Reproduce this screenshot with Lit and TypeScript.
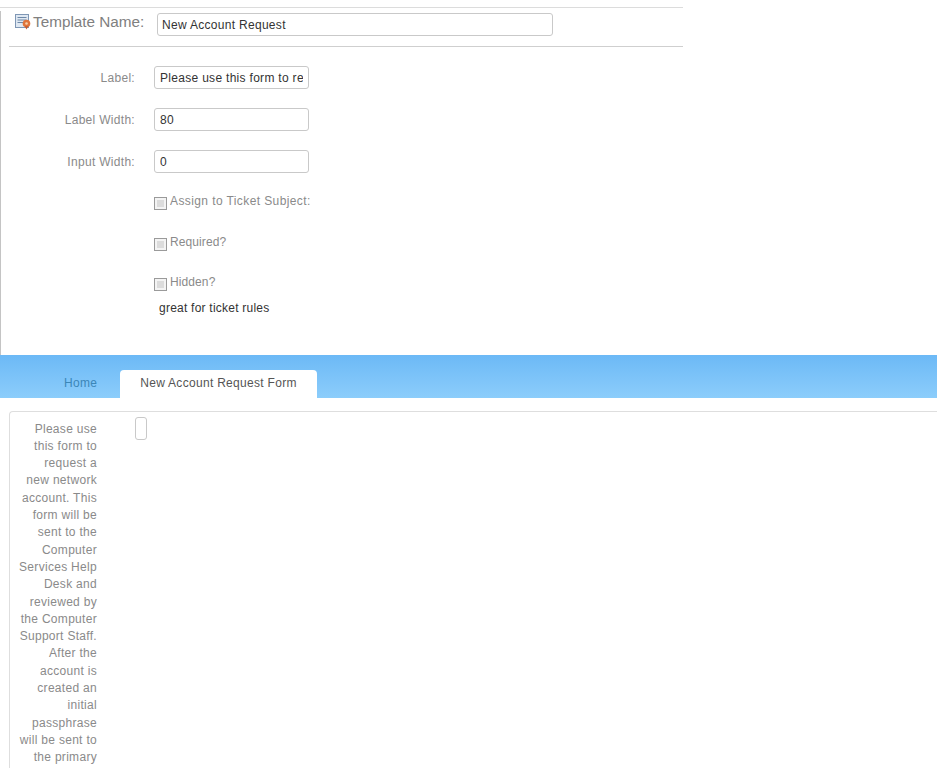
import { LitElement, html, css } from "lit";
import { customElement } from "lit/decorators.js";

const lines = ["Please use","this form to","request a","new network","account. This","form will be","sent to the","Computer","Services Help","Desk and","reviewed by","the Computer","Support Staff.","After the","account is","created an","initial","passphrase","will be sent to","the primary"];

@customElement("app-root")
export class AppRoot extends LitElement {
  static styles = css`
    :host { display: block; width: 937px; height: 768px; overflow: hidden; background: #fff; font-family: "Liberation Sans", Arial, sans-serif; font-size: 12px; letter-spacing: 0.3px; color: #8a8a8a; }
    .top { height: 355px; box-sizing: border-box; padding-top: 7px; }
    .panel { width: 683px; height: 348px; box-sizing: border-box; border-top: 1px solid #dcdcdc; position: relative; }
    .edge { position: absolute; left: 0; top: 3px; bottom: 0; width: 1px; background: #c4c4c4; }
    .name { margin-left: 9px; height: 39px; box-sizing: border-box; border-bottom: 1px solid #cfcfcf; display: flex; align-items: flex-start; padding-left: 6px; }
    .name svg { margin-top: 6px; flex: none; }
    .name label { font-size: 15.3px; letter-spacing: 0; color: #808080; margin-top: 5px; width: 124px; line-height: 18px; }
    .name input { width: 396px; height: 23px; margin-top: 5px; }
    input { box-sizing: border-box; border: 1px solid #c9c9c9; border-radius: 3px; background: #fff; padding: 0 4px; font: 12px "Liberation Sans", Arial, sans-serif; letter-spacing: 0.3px; color: #333; outline: none; display: block; }
    .rows { display: flex; flex-direction: column; padding-top: 19px; }
    .row { display: flex; align-items: center; height: 23px; margin-bottom: 19px; }
    .row label { width: 135px; text-align: right; margin-right: 19px; }
    .row input { width: 155px; height: 23px; padding: 0 5px; }
    .checks { margin-left: 154px; margin-top: 2px; }
    .check { display: flex; align-items: flex-start; gap: 3px; height: 41px; line-height: 14px; }
    .check:nth-child(2) { height: 40px; }
    .check:nth-child(3) { height: 26px; }
    .wide { letter-spacing: 0.4px; }
    .tight { letter-spacing: 0.1px; }
    .box { width: 13px; height: 13px; margin-top: 3px; box-sizing: border-box; border: 1px solid #9a9a9a; background: #dcdcdc; box-shadow: inset 0 0 0 2px #f4f4f4; flex: none; }
    .note { color: #333; margin-left: 5px; line-height: 14px; letter-spacing: 0.23px; }
    .tabs { height: 43px; box-sizing: border-box; background: linear-gradient(#6cb9f6, #8ccdfb); display: flex; align-items: flex-end; padding-left: 64px; }
    .home { color: #3b86b8; width: 56px; height: 28px; line-height: 27px; }
    .tab { width: 197px; height: 28px; box-sizing: border-box; background: #fff; border-radius: 4px 4px 0 0; color: #555; line-height: 27px; text-align: center; }
    .body { margin: 13px 0 0 9px; border: 1px solid #dedede; border-right: 0; border-radius: 4px 0 0 0; display: flex; height: 400px; box-sizing: border-box; }
    .desc { width: 87px; text-align: right; padding-top: 8.6px; line-height: 17.3px; flex: none; }
    .empty { width: 12px; height: 23px; box-sizing: border-box; margin: 5px 0 0 38px; border: 1px solid #c9c9c9; border-radius: 3px; }
  `;
  render() {
    return html`
      <div class="top"><div class="panel">
        <div class="edge"></div>
        <div class="name">
          <svg width="18" height="16" viewBox="0 0 18 16">
            <rect x="0.5" y="0.5" width="13" height="13" fill="#dfe8f2" stroke="#7f97b5"/>
            <path d="M2.5 3.5h9M2.5 6h9M2.5 8.5h6" stroke="#6d88a8"/>
            <circle cx="11.5" cy="9.5" r="3.8" fill="#e0743a"/>
            <path d="M9.8 12.3l1.7 3.2 1.7-3.2z" fill="#c9582a"/>
            <circle cx="11.5" cy="9.5" r="1.3" fill="#f6cfa8"/>
          </svg>
          <label>Template Name:</label>
          <input .value=${"New Account Request"} />
        </div>
        <div class="rows">
          <div class="row"><label>Label:</label><input .value=${"Please use this form to re"} /></div>
          <div class="row"><label>Label Width:</label><input .value=${"80"} /></div>
          <div class="row"><label>Input Width:</label><input .value=${"0"} /></div>
        </div>
        <div class="checks">
          <div class="check"><span class="box"></span><span class="wide">Assign to Ticket Subject:</span></div>
          <div class="check"><span class="box"></span><span class="tight">Required?</span></div>
          <div class="check"><span class="box"></span><span class="tight">Hidden?</span></div>
          <div class="note">great for ticket rules</div>
        </div>
      </div></div>
      <div class="tabs"><div class="home">Home</div><div class="tab">New Account Request Form</div></div>
      <div class="body">
        <div class="desc">${lines.map((l) => html`<div>${l}</div>`)}</div>
        <div class="empty"></div>
      </div>
    `;
  }
}
